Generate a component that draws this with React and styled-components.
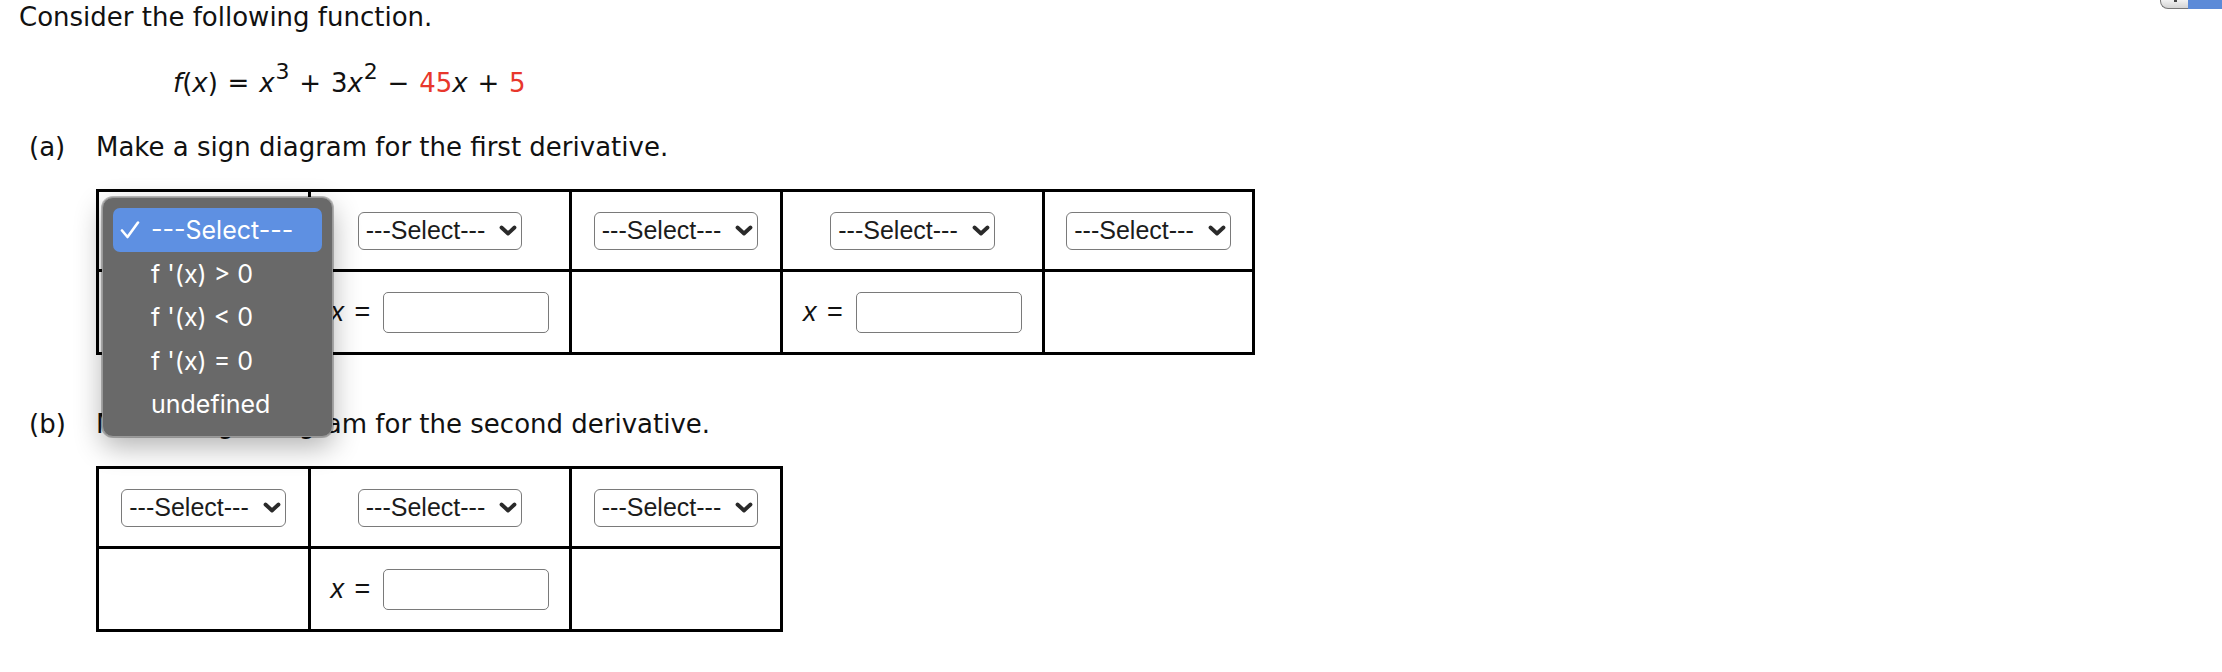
import styled, { createGlobalStyle } from "styled-components";

const GlobalStyle = createGlobalStyle`
  html, body {
    margin: 0;
    padding: 0;
    background: #fff;
  }
  body {
    font-family: "DejaVu Sans", Verdana, sans-serif;
    font-size: 26px;
    color: #111;
  }
`;

const Page = styled.div`
  position: relative;
  width: 2222px;
  height: 672px;
  padding-left: 19px;
  box-sizing: border-box;
  overflow: hidden;
`;

const Intro = styled.p`
  margin: 0;
  line-height: 34px;
`;

const Formula = styled.p`
  margin: 32px 0 0 154px;
  line-height: 34px;
  white-space: pre;
  word-spacing: 1.5px;
`;

const Var = styled.i`
  font-style: italic;
`;

const Sup = styled.sup`
  margin-left: 1px;
  font-size: 22px;
  line-height: 0;
  vertical-align: 13px;
`;

const Red = styled.span`
  color: #e8372c;
`;

const PartHeader = styled.div`
  display: flex;
  margin-top: ${(p) => p.$gap}px;
  padding-left: 10px;
  line-height: 34px;
`;

const PartLabel = styled.span`
  width: 67px;
  flex: none;
`;

const SignTable = styled.div`
  display: grid;
  grid-template-columns: ${(p) => p.$cols.map((c) => `${c}px`).join(" ")};
  grid-template-rows: 80px 83px;
  width: max-content;
  margin: ${(p) => p.$gap}px 0 0 77px;
  border-left: 3px solid #000;
  border-top: 3px solid #000;
`;

const Cell = styled.div`
  display: flex;
  align-items: center;
  justify-content: center;
  border-right: 3px solid #000;
  border-bottom: 3px solid #000;
  font-family: "Liberation Sans", Arial, sans-serif;
  font-size: 27px;
`;

const SelectBox = styled.div`
  display: inline-flex;
  align-items: center;
  gap: 14px;
  height: 38px;
  box-sizing: border-box;
  padding: 0 4px 0 7px;
  border: 1.5px solid #7a7a7a;
  border-radius: 6px;
  background: #fff;
  color: #1c1c1c;
  font-family: "Liberation Sans", Arial, sans-serif;
  font-size: 25px;
  white-space: nowrap;
`;

const XLabel = styled.span`
  margin-right: 13px;
  color: #111;
  white-space: pre;
  word-spacing: 3px;
`;

const AnswerInput = styled.div`
  width: 166px;
  height: 41px;
  box-sizing: border-box;
  border: 1.5px solid #7a7a7a;
  border-radius: 5px;
  background: #fff;
`;

const Menu = styled.div`
  position: absolute;
  left: 102px;
  top: 197px;
  z-index: 5;
  width: 231px;
  box-sizing: border-box;
  padding: 10px;
  background: #696969;
  border: 1px solid #9a9a9a;
  border-radius: 11px;
  box-shadow: 0 10px 28px rgba(0, 0, 0, 0.3), 0 0 0 1px rgba(0, 0, 0, 0.25);
  font-family: Inter, "Liberation Sans", Arial, sans-serif;
  font-size: 25px;
  color: #f4f4f4;
`;

const MenuItem = styled.div`
  display: flex;
  align-items: center;
  height: ${(p) => (p.$selected ? 44 : 43.5)}px;
  padding-left: 7px;
  border-radius: 7px;
  background: ${(p) => (p.$selected ? "#5e90e2" : "transparent")};
  color: #fff;
  white-space: nowrap;
`;

const CheckSlot = styled.span`
  display: inline-flex;
  width: 31px;
  flex: none;
`;

const Corner = styled.div`
  position: absolute;
  top: 0;
  right: 0;
  display: flex;
  height: 9px;
`;

const CornerKnob = styled.div`
  position: relative;
  width: 27px;
  background: linear-gradient(#f1f1f1, #d4d4d4);
  border-left: 1px solid #777;
  border-bottom: 1px solid #777;
  border-bottom-left-radius: 8px;

  &::after {
    content: "";
    position: absolute;
    left: 13px;
    top: 0;
    width: 3px;
    height: 2px;
    background: #444;
  }
`;

const CornerBar = styled.div`
  width: 34px;
  background: #5b8ad8;
`;

const Chevron = () => (
  <svg width="18" height="11" viewBox="0 0 18 11">
    <path d="M2.5 2.5 L9 8.5 L15.5 2.5" fill="none" stroke="#2a2a2a" strokeWidth="3.8" strokeLinecap="round" strokeLinejoin="round" />
  </svg>
);

const Check = () => (
  <svg width="20" height="18" viewBox="0 0 20 18">
    <path d="M2 9.5 L7.5 16 L18 1.5" fill="none" stroke="#fff" strokeWidth="2.6" strokeLinecap="round" strokeLinejoin="round" />
  </svg>
);

const Select = () => (
  <SelectBox>
    <span>---Select---</span>
    <Chevron />
  </SelectBox>
);

const XEquals = () => (
  <>
    <XLabel>
      <Var>x</Var> =
    </XLabel>
    <AnswerInput />
  </>
);

const menuOptions = ["f '(x) > 0", "f '(x) < 0", "f '(x) = 0", "undefined"];

const firstCols = [212, 261, 211, 262, 210];
const secondCols = [212, 261, 211];

const App = () => {
  return (
    <Page>
      <GlobalStyle />
      <Intro>Consider the following function.</Intro>
      <Formula>
        <Var>f</Var>(<Var>x</Var>) = <Var>x</Var>
        <Sup>3</Sup> + 3<Var>x</Var>
        <Sup>2</Sup> − <Red>45</Red>
        <Var>x</Var> + <Red>5</Red>
      </Formula>

      <PartHeader $gap={30}>
        <PartLabel>(a)</PartLabel>
        <span>Make a sign diagram for the first derivative.</span>
      </PartHeader>
      <SignTable $cols={firstCols} $gap={25}>
        <Cell>
          <Select />
        </Cell>
        <Cell>
          <Select />
        </Cell>
        <Cell>
          <Select />
        </Cell>
        <Cell>
          <Select />
        </Cell>
        <Cell>
          <Select />
        </Cell>
        <Cell />
        <Cell>
          <XEquals />
        </Cell>
        <Cell />
        <Cell>
          <XEquals />
        </Cell>
        <Cell />
      </SignTable>

      <PartHeader $gap={52}>
        <PartLabel>(b)</PartLabel>
        <span>Make a sign diagram for the second derivative.</span>
      </PartHeader>
      <SignTable $cols={secondCols} $gap={25}>
        <Cell>
          <Select />
        </Cell>
        <Cell>
          <Select />
        </Cell>
        <Cell>
          <Select />
        </Cell>
        <Cell />
        <Cell>
          <XEquals />
        </Cell>
        <Cell />
      </SignTable>

      <Menu>
        <MenuItem $selected>
          <CheckSlot>
            <Check />
          </CheckSlot>
          ---Select---
        </MenuItem>
        {menuOptions.map((o) => (
          <MenuItem key={o}>
            <CheckSlot />
            {o}
          </MenuItem>
        ))}
      </Menu>

      <Corner>
        <CornerKnob />
        <CornerBar />
      </Corner>
    </Page>
  );
};

export default App;
